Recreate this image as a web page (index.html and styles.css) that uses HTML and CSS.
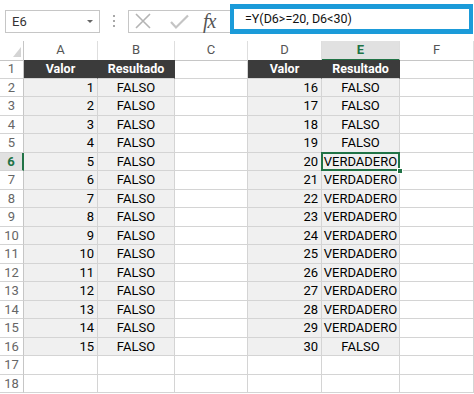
FILE: index.html
```html
<!DOCTYPE html>
<html lang="es">
<head>
  <meta charset="UTF-8">
  <meta name="viewport" content="width=device-width, initial-scale=1.0">
  <title>Función Y</title>
  <link rel="stylesheet" href="styles.css">
</head>
<body>
  <!-- barra de fórmulas -->
  <div class="formula_bar">
    <div class="name_box"><span>E6</span><i class="arrow"></i></div>
    <div class="dots"><i></i><i></i><i></i></div>
    <div class="fx_box">
      <svg width="64" height="21" viewBox="0 0 64 21">
        <path d="M3 3 L17 17 M17 3 L3 17" stroke="#b4b4b4" stroke-width="1.6" fill="none"/>
        <path d="M38 11 L43 16.5 L55 4.5" stroke="#c4c4c4" stroke-width="2.2" fill="none"/>
      </svg>
      <span class="fx">fx</span>
    </div>
    <div class="formula">=Y(D6&gt;=20, D6&lt;30)</div>
  </div>

  <!-- hoja -->
  <div class="sheet">
    <div class="row head">
      <div class="rh corner"><i></i></div>
      <div class="ch">A</div><div class="ch">B</div><div class="ch">C</div>
      <div class="ch">D</div><div class="ch active">E</div><div class="ch">F</div>
    </div>
    <div class="row">
      <div class="rh">1</div>
      <div class="c title">Valor</div><div class="c title">Resultado</div><div class="c"></div>
      <div class="c title">Valor</div><div class="c title">Resultado</div><div class="c"></div>
    </div>
    <div class="row">
      <div class="rh">2</div>
      <div class="c d num">1</div><div class="c d">FALSO</div><div class="c"></div>
      <div class="c d num">16</div><div class="c d">FALSO</div><div class="c"></div>
    </div>
    <div class="row">
      <div class="rh">3</div>
      <div class="c d num">2</div><div class="c d">FALSO</div><div class="c"></div>
      <div class="c d num">17</div><div class="c d">FALSO</div><div class="c"></div>
    </div>
    <div class="row">
      <div class="rh">4</div>
      <div class="c d num">3</div><div class="c d">FALSO</div><div class="c"></div>
      <div class="c d num">18</div><div class="c d">FALSO</div><div class="c"></div>
    </div>
    <div class="row">
      <div class="rh">5</div>
      <div class="c d num">4</div><div class="c d">FALSO</div><div class="c"></div>
      <div class="c d num">19</div><div class="c d">FALSO</div><div class="c"></div>
    </div>
    <div class="row">
      <div class="rh active">6</div>
      <div class="c d num">5</div><div class="c d">FALSO</div><div class="c"></div>
      <div class="c d num">20</div><div class="c d selected">VERDADERO<i class="handle"></i></div><div class="c"></div>
    </div>
    <div class="row">
      <div class="rh">7</div>
      <div class="c d num">6</div><div class="c d">FALSO</div><div class="c"></div>
      <div class="c d num">21</div><div class="c d">VERDADERO</div><div class="c"></div>
    </div>
    <div class="row">
      <div class="rh">8</div>
      <div class="c d num">7</div><div class="c d">FALSO</div><div class="c"></div>
      <div class="c d num">22</div><div class="c d">VERDADERO</div><div class="c"></div>
    </div>
    <div class="row">
      <div class="rh">9</div>
      <div class="c d num">8</div><div class="c d">FALSO</div><div class="c"></div>
      <div class="c d num">23</div><div class="c d">VERDADERO</div><div class="c"></div>
    </div>
    <div class="row">
      <div class="rh">10</div>
      <div class="c d num">9</div><div class="c d">FALSO</div><div class="c"></div>
      <div class="c d num">24</div><div class="c d">VERDADERO</div><div class="c"></div>
    </div>
    <div class="row">
      <div class="rh">11</div>
      <div class="c d num">10</div><div class="c d">FALSO</div><div class="c"></div>
      <div class="c d num">25</div><div class="c d">VERDADERO</div><div class="c"></div>
    </div>
    <div class="row">
      <div class="rh">12</div>
      <div class="c d num">11</div><div class="c d">FALSO</div><div class="c"></div>
      <div class="c d num">26</div><div class="c d">VERDADERO</div><div class="c"></div>
    </div>
    <div class="row">
      <div class="rh">13</div>
      <div class="c d num">12</div><div class="c d">FALSO</div><div class="c"></div>
      <div class="c d num">27</div><div class="c d">VERDADERO</div><div class="c"></div>
    </div>
    <div class="row">
      <div class="rh">14</div>
      <div class="c d num">13</div><div class="c d">FALSO</div><div class="c"></div>
      <div class="c d num">28</div><div class="c d">VERDADERO</div><div class="c"></div>
    </div>
    <div class="row">
      <div class="rh">15</div>
      <div class="c d num">14</div><div class="c d">FALSO</div><div class="c"></div>
      <div class="c d num">29</div><div class="c d">VERDADERO</div><div class="c"></div>
    </div>
    <div class="row">
      <div class="rh">16</div>
      <div class="c d num">15</div><div class="c d">FALSO</div><div class="c"></div>
      <div class="c d num">30</div><div class="c d">FALSO</div><div class="c"></div>
    </div>
    <div class="row">
      <div class="rh">17</div>
      <div class="c"></div><div class="c"></div><div class="c"></div>
      <div class="c"></div><div class="c"></div><div class="c"></div>
    </div>
    <div class="row">
      <div class="rh">18</div>
      <div class="c"></div><div class="c"></div><div class="c"></div>
      <div class="c"></div><div class="c"></div><div class="c"></div>
    </div>
  </div>
</body>
</html>
```

FILE: styles.css
```css
* {
  margin: 0;
  padding: 0;
  box-sizing: border-box;
}
body {
  width: 474px;
  height: 394px;
  overflow: hidden;
  background-color: #fff;
  font-family: Roboto, "Liberation Sans", sans-serif;
  font-size: 13px;
  color: #222;
}

/* barra de fórmulas */
.formula_bar {
  display: flex;
  align-items: flex-start;
  height: 41px;
}
.name_box {
  display: flex;
  align-items: center;
  justify-content: space-between;
  width: 95px;
  height: 23px;
  margin: 10px 0 0 5px;
  padding: 0 6px 0 6px;
  border: 1px solid #c6c6c6;
  color: #333;
}
.name_box .arrow {
  width: 0;
  height: 0;
  border-left: 3px solid transparent;
  border-right: 3px solid transparent;
  border-top: 3px solid #666;
}
.dots {
  display: flex;
  flex-direction: column;
  align-items: center;
  gap: 3px;
  width: 28px;
  margin-top: 15px;
}
.dots i {
  width: 2px;
  height: 2px;
  background-color: #a8a8a8;
}
.fx_box {
  display: flex;
  align-items: center;
  width: 102px;
  height: 23px;
  margin-top: 10px;
  padding-left: 4px;
  border: 1px solid #c6c6c6;
  border-right: none;
}
.fx_box svg {
  display: block;
}
.fx {
  margin-left: 6px;
  font-family: "Liberation Serif", serif;
  font-style: italic;
  font-size: 20px;
  color: #555;
  letter-spacing: -1px;
}
.formula {
  flex: 1;
  height: 30px;
  margin: 4px 1px 0 0;
  padding-left: 11px;
  border: solid #1b9bd9;
  border-width: 5px 4px;
  line-height: 20px;
  font-size: 12.5px;
  color: #111;
}

/* hoja */
.row {
  display: grid;
  grid-template-columns: 24px 74px 77px 73px 74px 78px 1fr;
  height: 18.5px;
}
.row.head {
  height: 19px;
}
.rh, .c, .ch {
  border-right: 1px solid #d4d4d4;
  border-bottom: 1px solid #d4d4d4;
  line-height: 17.5px;
  white-space: nowrap;
}
.rh {
  text-align: center;
  color: #666;
  border-right-color: #c6c6c6;
}
.rh.active {
  background-color: #e1e1e1;
  color: #217346;
  font-weight: bold;
  border-right: 2px solid #217346;
}
.corner {
  position: relative;
  border-bottom-color: #c6c6c6;
}
.corner i {
  position: absolute;
  right: 2px;
  bottom: 3px;
  width: 0;
  height: 0;
  border-left: 8px solid transparent;
  border-bottom: 10px solid #d4d4d4;
}
.ch {
  text-align: center;
  color: #555;
  line-height: 18px;
  border-right-color: #dedede;
  border-bottom-color: #c6c6c6;
}
.ch.active {
  background-color: #e1e1e1;
  color: #217346;
  font-weight: bold;
  border-bottom: 2px solid #217346;
}
.c {
  text-align: center;
}
.c.d {
  background-color: #f0f0f0;
  color: #000;
}
.c.num {
  text-align: right;
  padding-right: 3px;
}
.c.title {
  background-color: #3b3b3b;
  border-right-color: #3b3b3b;
  color: #fff;
  font-weight: bold;
  font-size: 12.5px;
}
.selected {
  position: relative;
}
.selected::after {
  content: "";
  position: absolute;
  top: -1px;
  left: -1px;
  right: -1px;
  bottom: -1px;
  border: 2px solid #217346;
}
.selected .handle {
  position: absolute;
  right: -4px;
  bottom: -4px;
  width: 6px;
  height: 6px;
  background-color: #217346;
  border: 1px solid #fff;
  z-index: 1;
}
```
